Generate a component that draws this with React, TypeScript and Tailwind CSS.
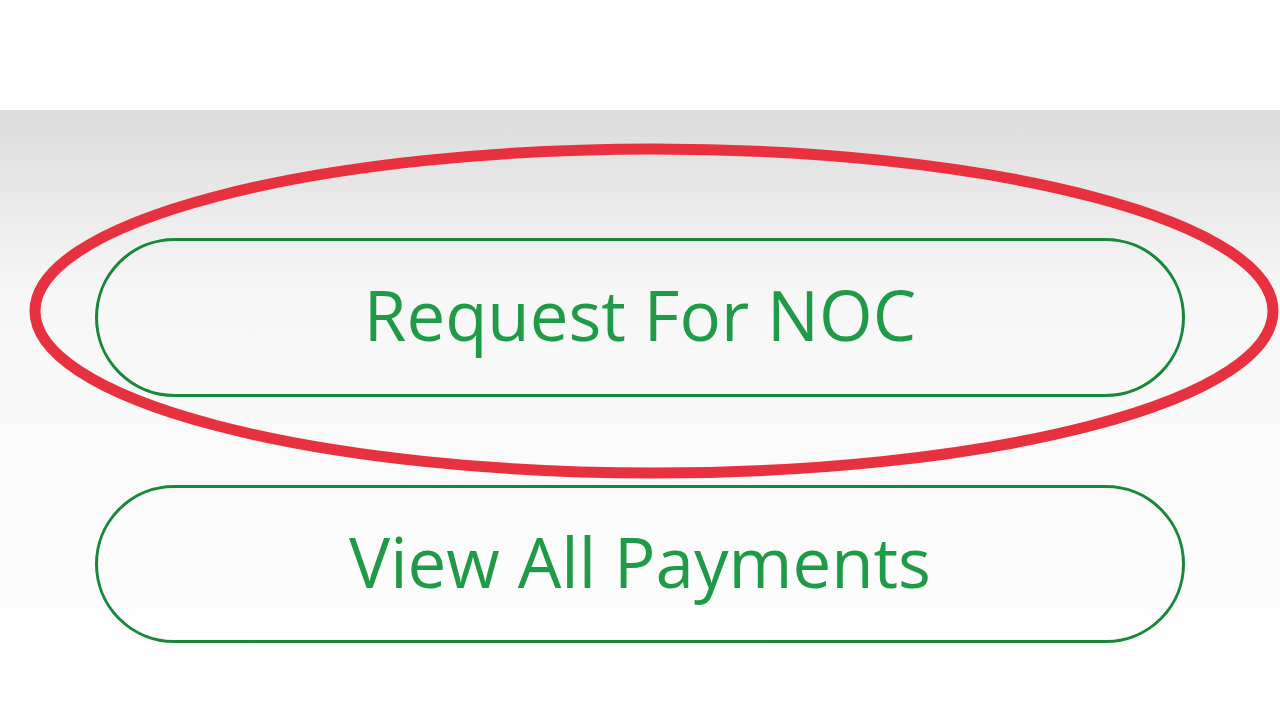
export default function App() {
  return (
    <div className="relative w-[1280px] h-[720px] overflow-hidden bg-white" style={{ fontFamily: '"Open Sans", "Noto Sans", sans-serif' }}>
      <div className="h-[110px] bg-white" />
      <div className="h-[610px] bg-gradient-to-b from-[#dcdcdc] via-[#f7f7f7] via-30% to-white px-[95px] pt-[128px] flex flex-col gap-[88px]">
        <button className="h-[159px] w-full rounded-full border-[3px] border-[#17883a] flex items-center justify-center text-[69px] leading-none text-[#1f9a47] pb-[6px]">
          Request For NOC
        </button>
        <button className="h-[158px] w-full rounded-full border-[3px] border-[#17883a] flex items-center justify-center text-[69px] leading-none text-[#1f9a47] pb-[6px]">
          View All Payments
        </button>
      </div>
      <svg className="absolute left-0 top-0 pointer-events-none" width="1280" height="720" viewBox="0 0 1280 720">
        <ellipse cx="654" cy="311" rx="619" ry="162" fill="none" stroke="#e8313f" strokeWidth="11" />
      </svg>
    </div>
  );
}
